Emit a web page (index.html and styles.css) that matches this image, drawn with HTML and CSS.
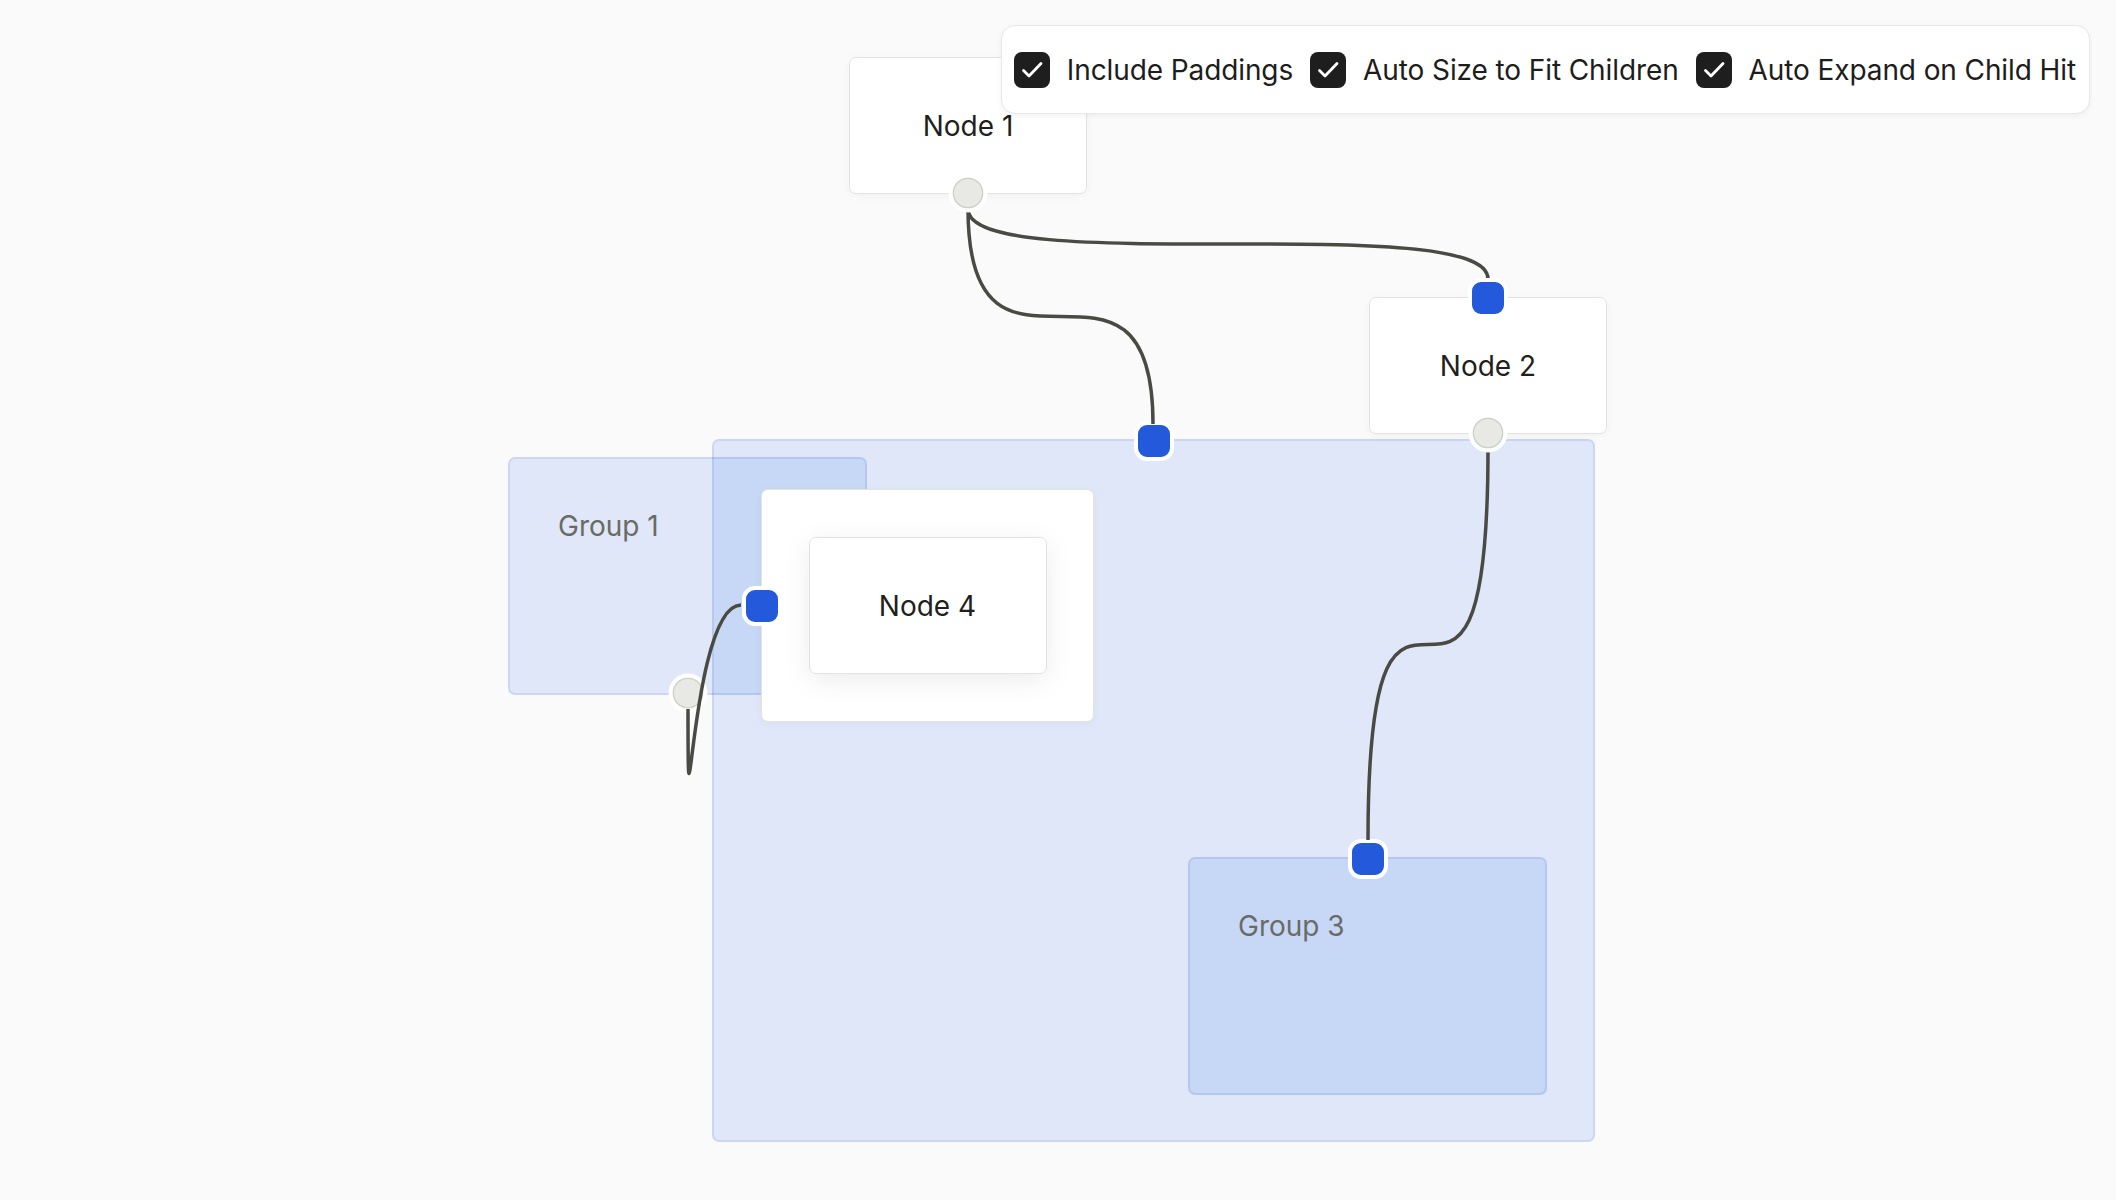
FILE: index.html
```html
<!DOCTYPE html>
<html lang="en">
<head>
  <meta charset="UTF-8">
  <meta name="viewport" content="width=device-width, initial-scale=1.0">
  <title>Group Nodes</title>
  <link rel="stylesheet" href="styles.css">
</head>
<body>
  <div class="flow">
    <!-- groups -->
    <div class="group group-2">
      Group 2
      <span class="handle target handle-top"></span>
    </div>
    <div class="group group-1">
      Group 1
      <span class="handle source handle-bottom"></span>
    </div>
    <div class="group group-3">
      Group 3
      <span class="handle target handle-top"></span>
    </div>

    <!-- edges -->
    <svg class="edges" width="2116" height="1200" viewBox="0 0 2116 1200">
      <path d="M968,209 C968,279 1488,209 1488,279" />
      <path d="M968,209 C968,424 1153,209 1153,424" />
      <path d="M1488,449 C1488,840 1368,449 1368,840" />
      <path d="M688,709 C688,900 690,605 741,605" />
    </svg>

    <!-- nodes -->
    <div class="node node-3">
      <div class="node node-4">Node 4</div>
      <span class="handle target handle-left"></span>
    </div>
    <div class="node node-1">
      Node 1
      <span class="handle source handle-bottom"></span>
    </div>
    <div class="node node-2">
      Node 2
      <span class="handle target handle-top"></span>
      <span class="handle source handle-bottom"></span>
    </div>

    <!-- options panel -->
    <div class="toolbar">
      <label class="option">
        <span class="check"><svg viewBox="0 0 36 36"><polyline points="9.5,18.5 15,24 27,11.5" /></svg></span>
        Include Paddings
      </label>
      <label class="option">
        <span class="check"><svg viewBox="0 0 36 36"><polyline points="9.5,18.5 15,24 27,11.5" /></svg></span>
        Auto Size to Fit Children
      </label>
      <label class="option">
        <span class="check"><svg viewBox="0 0 36 36"><polyline points="9.5,18.5 15,24 27,11.5" /></svg></span>
        Auto Expand on Child Hit
      </label>
    </div>
  </div>
</body>
</html>
```

FILE: styles.css
```css
    body {
      margin: 0;
      font-family: Inter, "Noto Sans", sans-serif;
    }

    .flow {
      position: relative;
      width: 100vw;
      height: 100vh;
      overflow: hidden;
      background-color: #fafafa;
    }

/*---------------------------------- GROUPS ----------------------------------*/
    .group {
      position: absolute;
      box-sizing: border-box;
      padding: 53px 48px;
      background-color: rgba(37, 99, 235, 0.12);
      border: 2px solid rgba(30, 70, 190, 0.11);
      border-radius: 7px;
      font-size: 28px;
      line-height: 1;
      color: #6b6b66;
    }

    .group-1 {
      left: 508px;
      top: 457px;
      width: 359px;
      height: 238px;
    }

    .group-2 {
      left: 712px;
      top: 439px;
      width: 883px;
      height: 703px;
    }

    .group-3 {
      left: 1188px;
      top: 857px;
      width: 359px;
      height: 238px;
    }

/*---------------------------------- EDGES ----------------------------------*/
    .edges {
      position: absolute;
      top: 0;
      left: 0;
      pointer-events: none;
    }

    .edges path {
      fill: none;
      stroke: #4a4a44;
      stroke-width: 3.5;
    }

/*---------------------------------- NODES ----------------------------------*/
    .node {
      position: absolute;
      box-sizing: border-box;
      display: flex;
      align-items: center;
      justify-content: center;
      width: 238px;
      height: 137px;
      background-color: #fff;
      border: 1.5px solid #e3e3e1;
      border-radius: 7px;
      box-shadow: 0 2px 10px rgba(0, 0, 0, 0.04);
      font-size: 28px;
      color: #1f1f1c;
    }

    .node-1 {
      left: 849px;
      top: 57px;
    }

    .node-2 {
      left: 1369px;
      top: 297px;
    }

    .node-3 {
      left: 761px;
      top: 489px;
      width: 333px;
      height: 233px;
    }

    .node-4 {
      position: static;
      box-shadow: 0 6px 28px rgba(0, 0, 0, 0.08);
    }

/*---------------------------------- HANDLES ----------------------------------*/
    .handle {
      position: absolute;
      box-sizing: border-box;
      transform: translate(-50%, -50%);
      border: 4px solid #fff;
    }

    .handle.source {
      width: 39px;
      height: 39px;
      border-radius: 50%;
      background-color: #e8e8e4;
      box-shadow: inset 0 0 0 1.5px #cfcfca;
    }

    .handle.target {
      width: 40px;
      height: 40px;
      border-radius: 13px;
      background-color: #2559dc;
    }

    .handle-top {
      left: 50%;
      top: 0;
    }

    .handle-bottom {
      left: 50%;
      top: 100%;
    }

    .handle-left {
      left: 0;
      top: 50%;
    }

/*---------------------------------- TOOLBAR ----------------------------------*/
    .toolbar {
      position: absolute;
      top: 25px;
      right: 26px;
      height: 89px;
      box-sizing: border-box;
      display: flex;
      align-items: center;
      gap: 17px;
      padding: 0 13px 0 12px;
      background-color: #fff;
      border: 1px solid #e7e7e5;
      border-radius: 14px;
      box-shadow: 0 2px 6px rgba(0, 0, 0, 0.05);
      font-size: 28px;
      letter-spacing: -0.1px;
      color: #1d1d1b;
    }

    .option {
      display: flex;
      align-items: center;
      gap: 17px;
      white-space: nowrap;
      cursor: pointer;
    }

    .check {
      display: flex;
      width: 36px;
      height: 36px;
      border-radius: 8px;
      background-color: #1e1e1e;
    }

    .check svg {
      width: 36px;
      height: 36px;
    }

    .check polyline {
      fill: none;
      stroke: #fff;
      stroke-width: 2.8;
      stroke-linecap: round;
      stroke-linejoin: round;
    }
```
